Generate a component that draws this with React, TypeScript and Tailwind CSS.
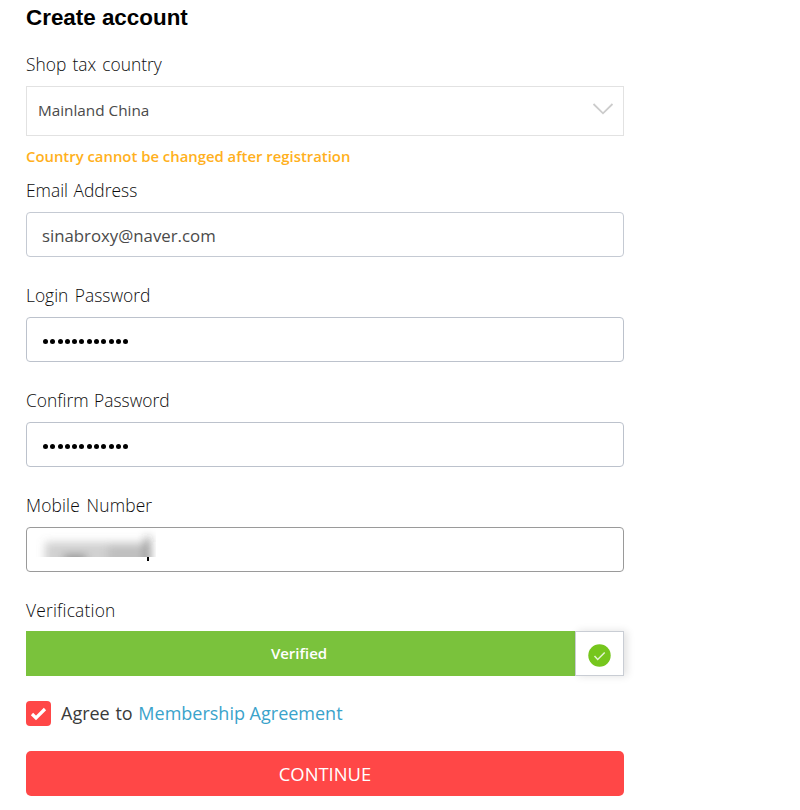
import React from "react";

const SANS = "font-['Open_Sans','Noto_Sans',sans-serif]";

function Label({ children, className = "" }: { children: string; className?: string }) {
  return (
    <label className={`block h-6 text-[17.4px] leading-[22px] font-[350] whitespace-nowrap text-[#0c0c0c] ${className}`}>
      {children}
    </label>
  );
}

function Dots() {
  return (
    <span className="ml-[16px] mt-[4px] flex gap-[2.3px]">
      {Array.from({ length: 12 }, (_, i) => (
        <span key={i} className="h-[5px] w-[5px] rounded-full bg-black" />
      ))}
    </span>
  );
}

const box = "flex h-[45px] items-center rounded-[4px] border";

export default function App() {
  return (
    <main className={`h-[810px] w-[800px] overflow-hidden bg-white pl-[26px] ${SANS}`}>
      <form className="w-[598px]">
        <h1 className="h-[53px] pt-[4px] font-['Liberation_Sans',Arial,sans-serif] text-[22.4px] leading-[27px] font-bold whitespace-nowrap text-black">
          Create account
        </h1>
        <Label className="[word-spacing:1.6px]">Shop tax country</Label>
        <div className="mt-[9px] flex h-[50px] items-center justify-between border border-[#e2e2e2] pr-[9px] pl-[11px]">
          <span className="-mt-[2px] text-[15.3px] whitespace-nowrap text-[#4a4a4a]">Mainland China</span>
          <svg width="22" height="14" viewBox="0 0 22 14" fill="none" className="-mt-[4px]">
            <path d="M1.5 2 11 11.3 20.5 2" stroke="#cccccc" strokeWidth="1.8" />
          </svg>
        </div>
        <p className="mt-[10px] h-[21px] text-[14.86px] leading-[21px] font-semibold whitespace-nowrap text-[#ffb020]">
          Country cannot be changed after registration
        </p>
        <Label className="mt-[12px] [word-spacing:1px]">Email Address</Label>
        <div className={`${box} mt-[9px] border-[#c5cad3] pt-[2px] pl-[15px]`}>
          <span className="text-[16.8px] whitespace-nowrap text-[#4a4a4a]">sinabroxy@naver.com</span>
        </div>
        <Label className="mt-[27px] [word-spacing:2px]">Login Password</Label>
        <div className={`${box} mt-[9px] border-[#bcc2cc]`}>
          <Dots />
        </div>
        <Label className="mt-[27px] [word-spacing:1px]">Confirm Password</Label>
        <div className={`${box} mt-[9px] border-[#bcc2cc]`}>
          <Dots />
        </div>
        <Label className="mt-[27px] tracking-[0.15px] [word-spacing:2px]">Mobile Number</Label>
        <div className={`${box} relative mt-[9px] border-[#9a9a9a]`}>
          <span className="ml-[9px] flex h-[30px] w-[120px] -translate-y-[8px] items-end overflow-hidden">
            <svg width="120" height="30" viewBox="0 0 120 30">
              <defs>
                <filter id="soft" filterUnits="userSpaceOnUse" x="-10" y="-10" width="150" height="65">
                  <feGaussianBlur stdDeviation="4" />
                </filter>
              </defs>
              <g filter="url(#soft)">
                <path d="M9 15H113V42H9Z" fill="#777" opacity=".34" />
                <path d="M28 28H50V38H28Z" fill="#333" opacity=".4" />
                <path d="M72 19H110V38H72Z" fill="#777" opacity=".2" />
                <path d="M109 10H114V40H109Z" fill="#222" opacity=".5" />
              </g>
            </svg>
          </span>
          <span className="absolute top-[29px] left-[120px] h-[4px] w-[2px] bg-black" />
        </div>
        <Label className="mt-[27px] tracking-[0.2px]">Verification</Label>
        <div className="mt-[8px] flex h-[45px]">
          <div className="flex w-[549px] items-center justify-center bg-[#7ac23c] pr-[3px] text-[15px] font-semibold text-white">
            Verified
          </div>
          <div className="flex flex-1 items-center justify-center border border-[#c9cdd4] bg-white pt-[4px] shadow-[3px_0_8px_rgba(0,0,0,0.12)]">
            <svg width="23" height="23" viewBox="0 0 23 23" fill="none">
              <circle cx="11.5" cy="11.5" r="11.2" fill="#76c61d" />
              <path d="m6.5 12 3.2 3.5 7-7" stroke="#e4f4d2" strokeWidth="1.5" />
            </svg>
          </div>
        </div>
        <div className="mt-[25px] flex h-[25px] items-center">
          <span className="flex h-[25px] w-[25px] items-center justify-center rounded-[4px] bg-[#ff4747]">
            <svg width="17" height="14" viewBox="0 0 17 14" fill="none">
              <path d="m2 7 4 4L15 2" stroke="white" strokeWidth="3.2" />
            </svg>
          </span>
          <span className="ml-[10px] text-[18px] whitespace-nowrap text-[#3a3a3a] [word-spacing:1px]">
            Agree to <a className="text-[#3aa3cb] [word-spacing:0px]">Membership Agreement</a>
          </span>
        </div>
        <button type="button" className="mt-[25px] block h-[45px] w-full rounded-[5px] bg-[#ff4747] pt-px text-[18.4px] text-white">
          CONTINUE
        </button>
      </form>
    </main>
  );
}
